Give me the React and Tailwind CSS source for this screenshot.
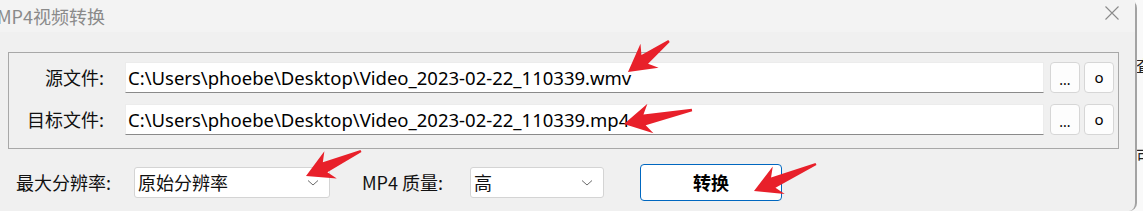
import React from 'react';

const ui = { fontFamily: '"Noto Sans CJK SC", "Noto Sans", sans-serif' };
const path = { fontFamily: '"Noto Sans", "Noto Sans CJK SC", sans-serif' };

// tip -> tail, arrow pointing at tip
const arrowPoints = (tip, tail) => {
    const dx = tail[0] - tip[0];
    const dy = tail[1] - tip[1];
    const len = Math.hypot(dx, dy);
    const ux = dx / len, uy = dy / len;
    const nx = -uy, ny = ux;
    const pt = (a, w) => [tip[0] + ux * a + nx * w, tip[1] + uy * a + ny * w];
    const pts = [pt(0, 0), pt(27, 15), pt(21, 5.5), pt(len, 1.2), pt(len, -1.2), pt(21, -5.5), pt(27, -15)];
    return pts.map((p) => p.join(',')).join(' ');
};

const arrows = [
    { tip: [628, 72], tail: [669, 41] },
    { tip: [624, 124], tail: [692, 110] },
    { tip: [306, 176], tail: [361, 151] },
    { tip: [754, 191], tail: [816, 164] },
];

const Chevron = () => (
    <svg width="12" height="8" viewBox="0 0 12 8" className="text-[#6b6b6b]">
        <path d="M1 1.5 L6 6 L11 1.5" fill="none" stroke="currentColor" strokeWidth="1" />
    </svg>
);

const FileRow = ({ label, value }) => (
    <div className="flex items-center h-[31px]">
        <div className="w-[95px] text-right text-[18px] text-[#111]" style={ui}>{label}</div>
        <div className="ml-[21px] w-[919px] h-full bg-white border border-[#ececec] border-b-[#8a8a8a] flex items-center pl-[2px] text-[18.5px] text-black" style={path}>
            {value}
        </div>
        <button className="ml-[6px] w-[30px] h-full bg-[#fdfdfd] border border-[#d6d6d6] rounded-[4px] text-[14px] text-black leading-none pt-[4px]" style={path}>...</button>
        <button className="ml-[4px] w-[30px] h-full bg-[#fdfdfd] border border-[#d6d6d6] rounded-[4px] text-[15px] text-black leading-none" style={path}>o</button>
    </div>
);

const Select = ({ value, width }) => (
    <div className={`${width} h-[31px] bg-white border border-[#d4d4d4] rounded-[3px] flex items-center justify-between pl-[3px] pr-[10px]`}>
        <span className="text-[18px] text-[#111]" style={ui}>{value}</span>
        <Chevron />
    </div>
);

export default function App() {
    return (
        <div className="relative w-[1143px] h-[211px] flex bg-[#f9f9f9] overflow-hidden">
            {/* dialog window */}
            <div className="w-[1137px] h-full bg-[#f0f0f0] border-r-2 border-[#a3a3a3] rounded-r-[8px] flex flex-col">
                {/* title bar */}
                <div className="h-[32px] bg-[#f3f3f3] flex items-center justify-between">
                    <span className="ml-[-3px] text-[18px] text-[#8a8a8a]" style={ui}>MP4视频转换</span>
                    <svg width="14" height="14" viewBox="0 0 14 14" className="mr-[16px] mb-[6px]">
                        <path d="M0.5 0.5 L13.5 13.5 M13.5 0.5 L0.5 13.5" stroke="#8a8a8a" strokeWidth="1.1" />
                    </svg>
                </div>

                {/* file group */}
                <div className="ml-[8px] mt-[20px] w-[1111px] h-[97px] border border-[#a8a8a8] flex flex-col pt-[9px] gap-[11px]">
                    <FileRow label="源文件:" value="C:\Users\phoebe\Desktop\Video_2023-02-22_110339.wmv" />
                    <FileRow label="目标文件:" value="C:\Users\phoebe\Desktop\Video_2023-02-22_110339.mp4" />
                </div>

                {/* options row */}
                <div className="flex items-center mt-[15px] pl-[16px]">
                    <span className="w-[118px] text-[18px] text-[#111]" style={ui}>最大分辨率:</span>
                    <Select value="原始分辨率" width="w-[196px]" />
                    <span className="ml-[32px] w-[108px] text-[18px] text-[#111]" style={ui}>MP4 质量:</span>
                    <Select value="高" width="w-[134px]" />
                    <button className="ml-[36px] w-[142px] h-[37px] bg-white border border-[#0067c0] rounded-[4px] text-[18px] font-bold text-black" style={ui}>转换</button>
                </div>
            </div>

            {/* window behind, peeking at the right edge */}
            <div className="flex-1 flex flex-col text-[16px] text-[#222] overflow-hidden" style={ui}>
                <span className="mt-[53px] -ml-[1px]">査</span>
                <span className="mt-[66px] -ml-[1px]">可</span>
            </div>

            {/* annotation arrows */}
            <svg className="absolute inset-0 pointer-events-none" width="1143" height="211">
                {arrows.map((a, i) => (
                    <polygon key={i} points={arrowPoints(a.tip, a.tail)} fill="#e8202a" />
                ))}
            </svg>
        </div>
    );
}
